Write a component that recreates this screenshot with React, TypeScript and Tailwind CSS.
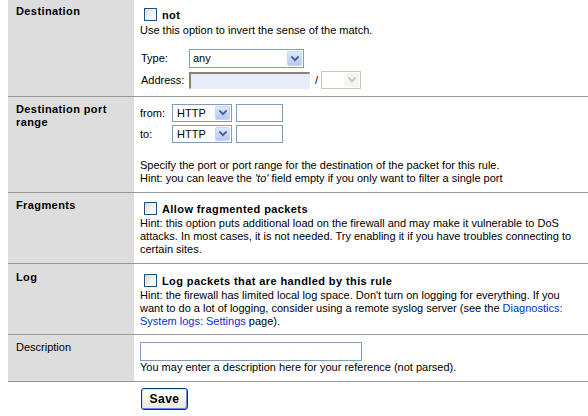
import React from "react";

function Checkbox() {
  return (
    <span className="ml-[4px] mt-[3px] block h-[13px] w-[13px] shrink-0 border border-[#1c5180] bg-gradient-to-br from-[#d8d8d2] via-[#f2f2ef] to-white" />
  );
}

function Chevron({ color }: { color: string }) {
  return (
    <svg width="8" height="6" viewBox="0 0 8 6" className="block">
      <polyline points="1,1.2 4,4.2 7,1.2" fill="none" stroke={color} strokeWidth="2" strokeLinecap="square" />
    </svg>
  );
}

function ArrowBtn() {
  return (
    <span className="flex h-full w-[15px] shrink-0 items-center justify-center rounded-[2px] border border-[#c6d5fb] bg-gradient-to-b from-[#dfe8fe] to-[#b3c8f6]">
      <Chevron color="#4d6185" />
    </span>
  );
}

function PortSelect() {
  return (
    <div className="flex h-[18px] w-[60px] shrink-0 border border-[#7f9db9] bg-white p-[1px]">
      <span className="flex-1 pl-[3px] leading-[14px]">HTTP</span>
      <ArrowBtn />
    </div>
  );
}

function PortInput() {
  return <div className="ml-[4px] h-[18px] w-[47px] shrink-0 border border-[#7f9db9] bg-white" />;
}

export default function App() {
  return (
    <div className="h-[416px] w-[588px] overflow-hidden bg-white font-['Liberation_Sans',Arial,sans-serif] text-[11px] leading-[13px] text-black">
      <div className="ml-[8px] w-[580px]">
        {/* Destination */}
        <div className="flex h-[97px] border-b border-[#999999]">
          <div className="w-[126px] shrink-0 bg-[#dddddd] pl-[8px] pr-[20px] pt-[5px] font-bold tracking-[0.4px]">
            Destination
          </div>
          <div className="flex-1 pl-[6px] pt-[5px]">
            <div className="flex h-[19px] items-start">
              <Checkbox />
              <span className="ml-[5px] mt-[4px] font-bold tracking-[0.4px]">not</span>
            </div>
            <div className="whitespace-nowrap">Use this option to invert the sense of the match.</div>
            <div className="mt-[12px] flex items-center">
              <span className="w-[49px] shrink-0 pl-[1px]">Type:</span>
              <div className="flex h-[19px] w-[115px] shrink-0 border border-[#7f9db9] bg-white p-[1px]">
                <span className="flex-1 pl-[2px] leading-[15px]">any</span>
                <ArrowBtn />
              </div>
            </div>
            <div className="mt-[3px] flex items-center">
              <span className="w-[49px] shrink-0 pl-[1px]">Address:</span>
              <div className="h-[17px] w-[121px] shrink-0 border-b border-l-2 border-r border-t-2 border-b-[#eeeeea] border-l-[#85837a] border-r-[#eeeeea] border-t-[#85837a] bg-[#e6ecf8]" />
              <span className="ml-[5px] w-[5px] shrink-0">/</span>
              <div className="ml-[1px] flex h-[18px] w-[40px] shrink-0 border border-[#c9c7ba] bg-white p-[1px]">
                <span className="flex-1" />
                <span className="flex h-full w-[15px] shrink-0 items-center justify-center rounded-[2px] bg-[#f4f4f0]">
                  <Chevron color="#c9c7ba" />
                </span>
              </div>
            </div>
          </div>
        </div>

        {/* Destination port range */}
        <div className="flex h-[96px] border-b border-[#999999]">
          <div className="w-[126px] shrink-0 bg-[#dddddd] pl-[8px] pr-[20px] pt-[6px] font-bold tracking-[0.4px]">
            Destination port range
          </div>
          <div className="flex-1 pl-[6px] pt-[7px]">
            <div className="flex items-center">
              <span className="w-[32px] shrink-0">from:</span>
              <PortSelect />
              <PortInput />
            </div>
            <div className="mt-[3px] flex items-center">
              <span className="w-[32px] shrink-0">to:</span>
              <PortSelect />
              <PortInput />
            </div>
            <div className="mt-[16px] whitespace-nowrap">
              Specify the port or port range for the destination of the packet for this rule.
              <br />
              Hint: you can leave the <i>'to'</i> field empty if you only want to filter a single port
            </div>
          </div>
        </div>

        {/* Fragments */}
        <div className="flex h-[71px] border-b border-[#999999]">
          <div className="w-[126px] shrink-0 bg-[#dddddd] pl-[8px] pr-[20px] pt-[6px] font-bold tracking-[0.4px]">
            Fragments
          </div>
          <div className="flex-1 pl-[6px] pt-[6px]">
            <div className="flex h-[18px] items-start">
              <Checkbox />
              <span className="ml-[5px] mt-[4px] font-bold tracking-[0.4px]">Allow fragmented packets</span>
            </div>
            <div className="whitespace-nowrap">
              Hint: this option puts additional load on the firewall and may make it vulnerable to DoS
              <br />
              attacks. In most cases, it is not needed. Try enabling it if you have troubles connecting to
              <br />
              certain sites.
            </div>
          </div>
        </div>

        {/* Log */}
        <div className="flex h-[71px] border-b border-[#999999]">
          <div className="w-[126px] shrink-0 bg-[#dddddd] pl-[8px] pr-[20px] pt-[7px] font-bold tracking-[0.4px]">
            Log
          </div>
          <div className="flex-1 pl-[6px] pt-[7px]">
            <div className="flex h-[18px] items-start">
              <Checkbox />
              <span className="ml-[5px] mt-[4px] font-bold tracking-[0.4px]">Log packets that are handled by this rule</span>
            </div>
            <div className="whitespace-nowrap">
              Hint: the firewall has limited local log space. Don't turn on logging for everything. If you
              <br />
              want to do a lot of logging, consider using a remote syslog server (see the{" "}
              <a href="#" className="text-[#0033cc]">
                Diagnostics:
                <br />
                System logs: Settings
              </a>{" "}
              page).
            </div>
          </div>
        </div>

        {/* Description */}
        <div className="flex h-[47px] border-b border-[#999999]">
          <div className="w-[126px] shrink-0 bg-[#dddddd] pl-[8px] pr-[20px] pt-[6px]">Description</div>
          <div className="flex-1 pl-[6px] pt-[7px]">
            <div className="h-[19px] w-[222px] border border-[#7f9db9] bg-white" />
            <div className="whitespace-nowrap">You may enter a description here for your reference (not parsed).</div>
          </div>
        </div>

        {/* Save */}
        <div className="flex">
          <div className="w-[126px] shrink-0" />
          <div className="flex-1 pl-[7px] pt-[6px]">
            <button
              type="button"
              className="flex h-[22px] w-[47px] items-center justify-center rounded-[3px] border border-[#003c74] bg-gradient-to-b from-white to-[#ece9d8] text-[12px] font-bold tracking-[0.5px] text-black shadow-[inset_1px_1px_0_#cee7ff,inset_-1px_-1px_0_#6982ee]"
            >
              Save
            </button>
          </div>
        </div>
      </div>
    </div>
  );
}
